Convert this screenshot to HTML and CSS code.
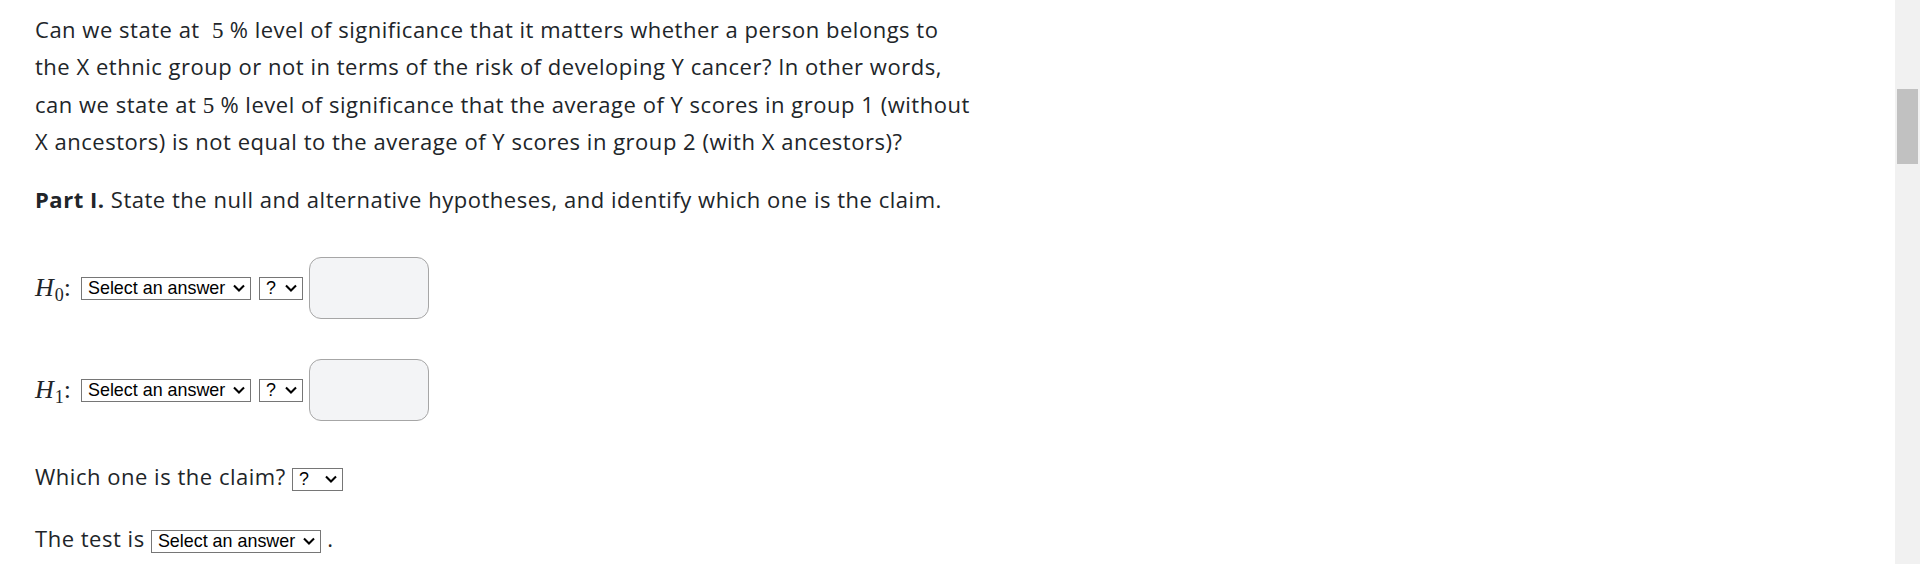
FILE: index.html
```html
<!DOCTYPE html>
<html lang="en">
<head>
<meta charset="utf-8">
<title>Hypothesis test</title>
<link rel="stylesheet" href="styles.css">
</head>
<body>
<div class="page">
  <main class="content">
    <p class="q">Can we state at <span class="m lead">5</span> % level of significance that it matters whether a person belongs to<br>the X ethnic group or not in terms of the risk of developing Y cancer? In other words,<br>can we state at <span class="m">5</span> % level of significance that the average of Y scores in group 1 (without<br>X ancestors) is not equal to the average of Y scores in group 2 (with X ancestors)?</p>
    <p class="part"><b>Part I.</b> State the null and alternative hypotheses, and identify which one is the claim.</p>

    <div class="hrow">
      <span class="hlabel"><i class="mi">H</i><span class="sub">0</span>:</span>
      <span class="sel w-answer"><span>Select an answer</span><svg class="chev" viewBox="0 0 12 8" width="12" height="8"><path d="M1 1.5 6 6.5 11 1.5"/></svg></span>
      <span class="sel w-q"><span>?</span><svg class="chev" viewBox="0 0 12 8" width="12" height="8"><path d="M1 1.5 6 6.5 11 1.5"/></svg></span>
      <span class="box"></span>
    </div>

    <div class="hrow second">
      <span class="hlabel"><i class="mi">H</i><span class="sub">1</span>:</span>
      <span class="sel w-answer"><span>Select an answer</span><svg class="chev" viewBox="0 0 12 8" width="12" height="8"><path d="M1 1.5 6 6.5 11 1.5"/></svg></span>
      <span class="sel w-q"><span>?</span><svg class="chev" viewBox="0 0 12 8" width="12" height="8"><path d="M1 1.5 6 6.5 11 1.5"/></svg></span>
      <span class="box"></span>
    </div>

    <p class="line claim">Which one is the claim? <span class="sel w-claim"><span>?</span><svg class="chev" viewBox="0 0 12 8" width="12" height="8"><path d="M1 1.5 6 6.5 11 1.5"/></svg></span></p>
    <p class="line test">The test is <span class="sel w-answer"><span>Select an answer</span><svg class="chev" viewBox="0 0 12 8" width="12" height="8"><path d="M1 1.5 6 6.5 11 1.5"/></svg></span> .</p>
  </main>
  <div class="scrollbar"><div class="thumb"></div></div>
</div>
</body>
</html>
```
FILE: styles.css
```css
html, body {
  margin: 0;
  padding: 0;
  background: #ffffff;
  overflow: hidden;
}

.page {
  display: flex;
  width: 1920px;
  height: 564px;
}

.content {
  flex: 1;
  padding: 11px 0 0 35px;
  font-family: "Open Sans", "Noto Sans", sans-serif;
  font-size: 22px;
  letter-spacing: 0.52px;
  color: #212529;
}

.content p {
  margin: 0;
  line-height: 37.33px;
}

.m {
  font-family: "Liberation Serif", serif;
  font-size: 23px;
  line-height: 1;
  letter-spacing: 0;
}

.m.lead {
  margin-left: 6px;
}

.part {
  margin-top: 21px !important;
}

.part b {
  font-weight: 700;
}

.hrow {
  display: flex;
  align-items: center;
  height: 62px;
  margin-top: 38.5px;
}

.hrow.second {
  margin-top: 40px;
}

.hlabel {
  font-family: "Liberation Serif", serif;
  font-size: 26px;
  letter-spacing: 0;
  margin-right: 10px;
  white-space: nowrap;
}

.mi {
  font-style: italic;
  letter-spacing: 1px;
}

.sub {
  font-size: 18px;
  position: relative;
  top: 5px;
}

.sel {
  display: inline-flex;
  align-items: center;
  justify-content: space-between;
  box-sizing: border-box;
  height: 23px;
  padding: 0 5px 0 6px;
  border: 1px solid #767676;
  background: #ffffff;
  color: #000000;
  font-family: "Liberation Sans", Arial, sans-serif;
  font-size: 17.9px;
  letter-spacing: 0;
  line-height: 21px;
  vertical-align: middle;
  white-space: nowrap;
}

.chev {
  flex: none;
  fill: none;
  stroke: #000000;
  stroke-width: 2.1;
}

.w-answer { width: 170px; }
.w-q { width: 44px; margin-left: 8px; }
.w-claim { width: 51px; }

.box {
  display: inline-block;
  box-sizing: border-box;
  width: 120px;
  height: 62px;
  margin-left: 6px;
  border: 1px solid #a6a6a6;
  border-radius: 12px;
  background: #f3f4f6;
}

.claim {
  margin-top: 37.2px !important;
}

.test {
  margin-top: 24.6px !important;
}

.scrollbar {
  flex: none;
  width: 25px;
  height: 564px;
  background: #f1f1f1;
  box-sizing: border-box;
  padding: 89px 2px 0 2px;
}

.thumb {
  height: 75px;
  background: #c1c1c1;
}
```
